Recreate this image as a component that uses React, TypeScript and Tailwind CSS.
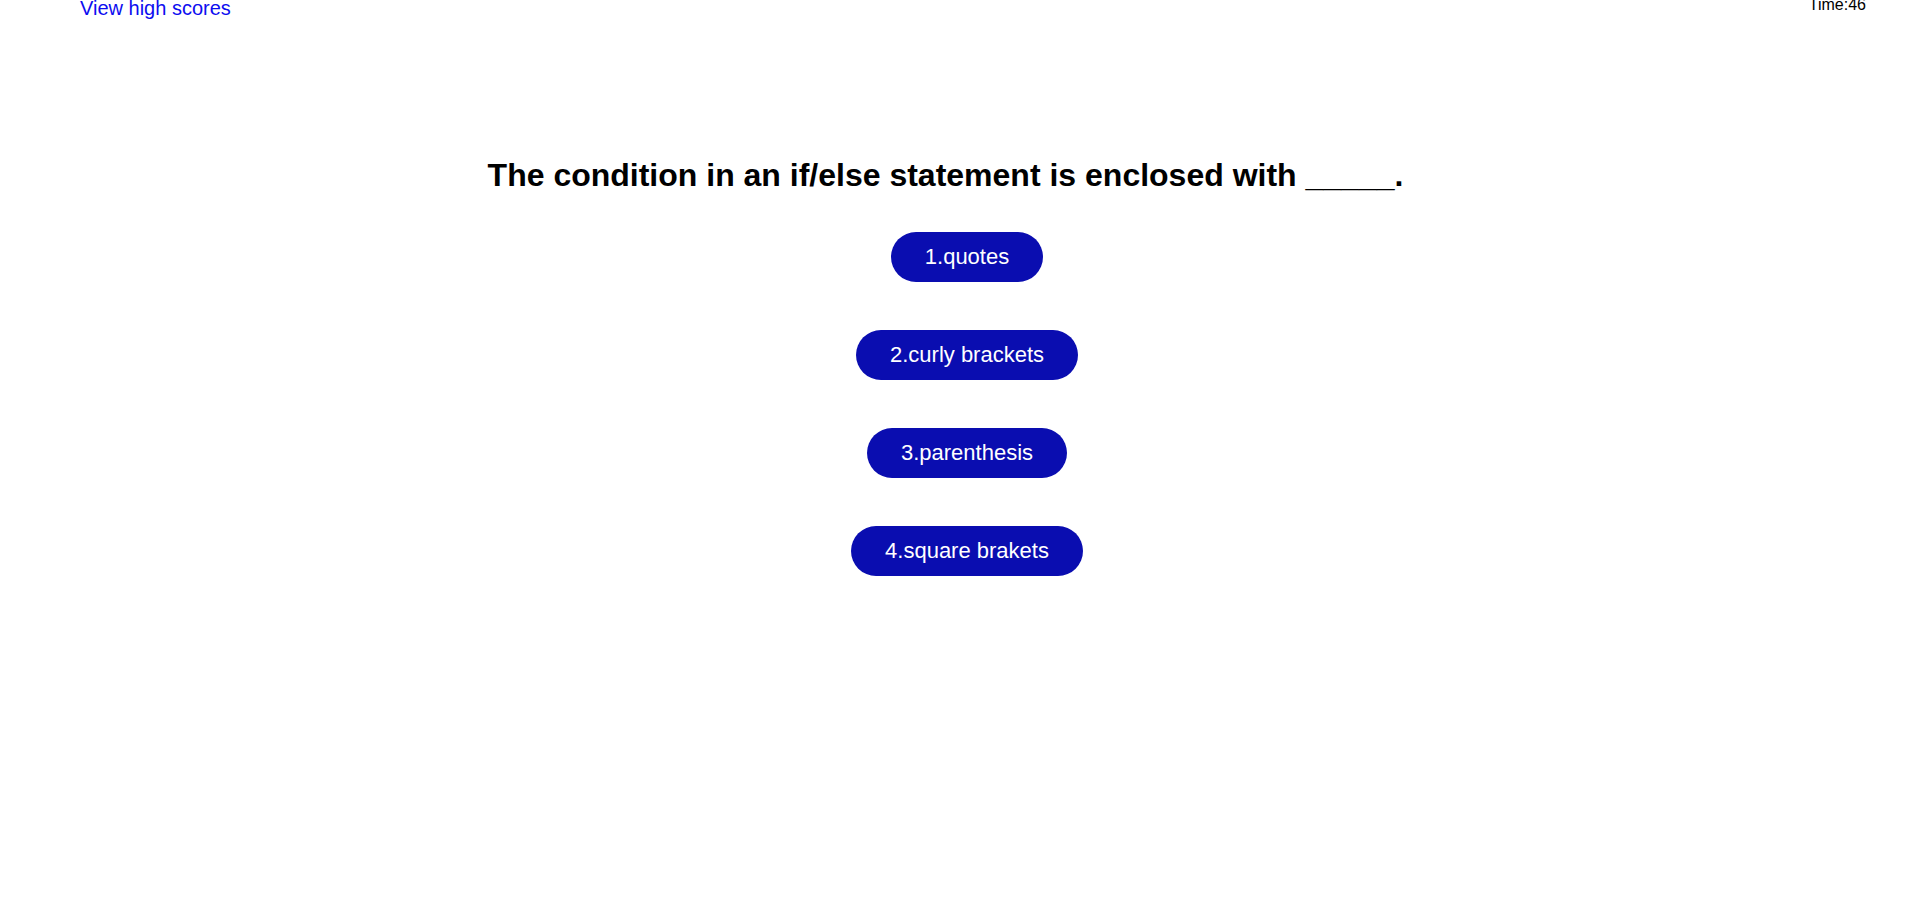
const choices = ["1.quotes", "2.curly brackets", "3.parenthesis", "4.square brakets"];

export default function App() {
  return (
    <div className="min-h-screen bg-white font-['Liberation_Sans',Arial,sans-serif] text-black">
      <header className="flex h-[20px] items-start justify-between overflow-visible">
        <a href="#" className="-mt-[3px] pl-[80px] text-[20px] leading-[23px] text-[#0d0df0]">
          View high scores
        </a>
        <div className="-mt-[4px] pr-[39px] text-[16px] leading-[18px]">Time:46</div>
      </header>

      <main>
        <h1 className="mt-[137px] pr-[14px] text-center text-[32px] font-bold leading-[37px]">
          The condition in an if/else statement is enclosed with _____.
        </h1>
        <div className="mt-[38px] flex flex-col items-center gap-[48px] pl-[29px]">
          {choices.map((c) => (
            <button
              key={c}
              className="h-[50px] rounded-full bg-[#0a0db0] px-[34px] pb-[2px] text-[22px] leading-[25px] text-white"
            >
              {c}
            </button>
          ))}
        </div>
      </main>
    </div>
  );
}
